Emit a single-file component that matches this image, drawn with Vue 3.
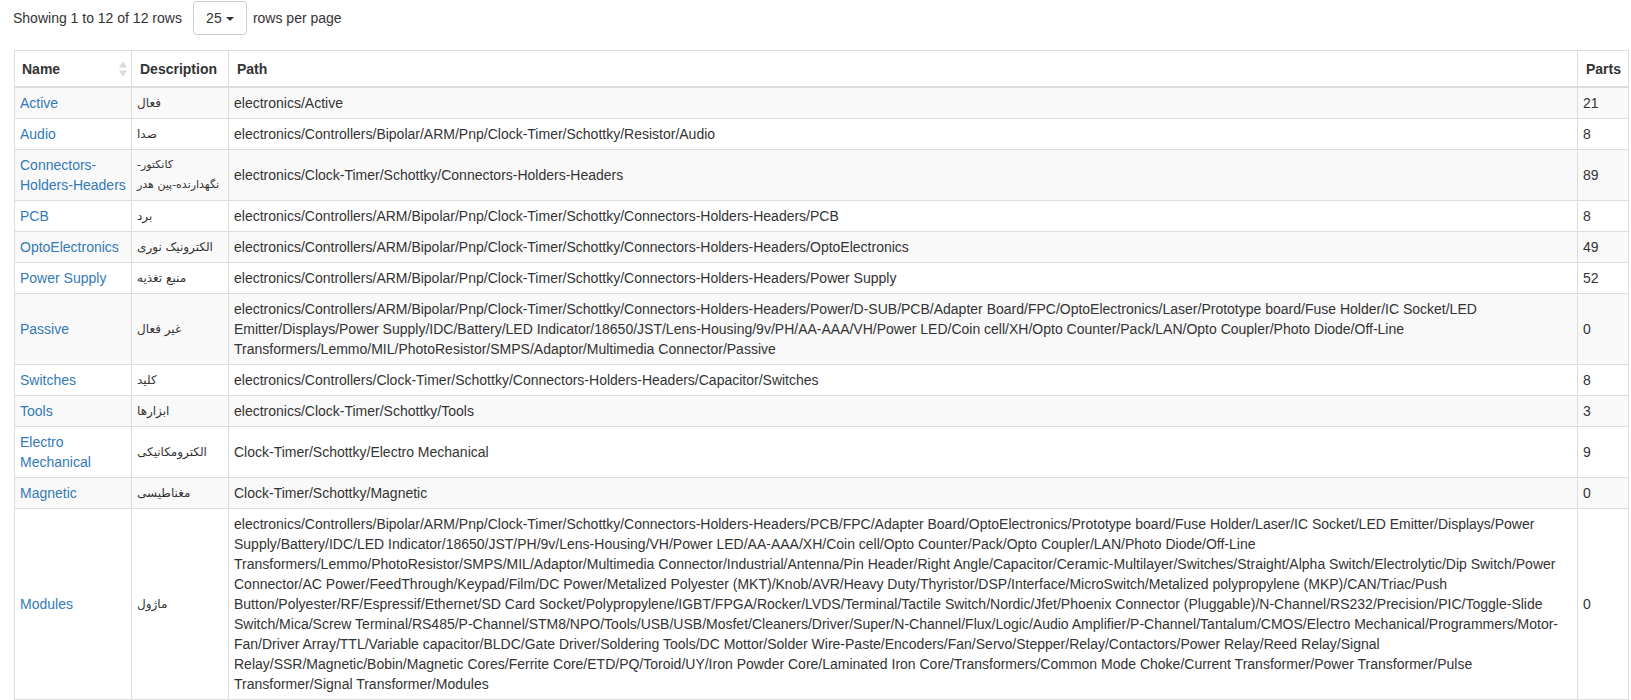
<script setup>
const rows = [
  { name: 'Active', desc: 'فعال', path: 'electronics/Active', parts: 21 },
  { name: 'Audio', desc: 'صدا', path: 'electronics/Controllers/Bipolar/ARM/Pnp/Clock-Timer/Schottky/Resistor/Audio', parts: 8 },
  { name: 'Connectors-Holders-Headers', desc: 'کانکتور-\nنگهدارنده-پین هدر', tight: true, path: 'electronics/Clock-Timer/Schottky/Connectors-Holders-Headers', parts: 89 },
  { name: 'PCB', desc: 'برد', path: 'electronics/Controllers/ARM/Bipolar/Pnp/Clock-Timer/Schottky/Connectors-Holders-Headers/PCB', parts: 8 },
  { name: 'OptoElectronics', desc: 'الکترونیک نوری', path: 'electronics/Controllers/ARM/Bipolar/Pnp/Clock-Timer/Schottky/Connectors-Holders-Headers/OptoElectronics', parts: 49 },
  { name: 'Power Supply', desc: 'منبع تغذیه', path: 'electronics/Controllers/ARM/Bipolar/Pnp/Clock-Timer/Schottky/Connectors-Holders-Headers/Power Supply', parts: 52 },
  { name: 'Passive', desc: 'غیر فعال', path: 'electronics/Controllers/ARM/Bipolar/Pnp/Clock-Timer/Schottky/Connectors-Holders-Headers/Power/D-SUB/PCB/Adapter Board/FPC/OptoElectronics/Laser/Prototype board/Fuse Holder/IC Socket/LED Emitter/Displays/Power Supply/IDC/Battery/LED Indicator/18650/JST/Lens-Housing/9v/PH/AA-AAA/VH/Power LED/Coin cell/XH/Opto Counter/Pack/LAN/Opto Coupler/Photo Diode/Off-Line Transformers/Lemmo/MIL/PhotoResistor/SMPS/Adaptor/Multimedia Connector/Passive', parts: 0 },
  { name: 'Switches', desc: 'کلید', path: 'electronics/Controllers/Clock-Timer/Schottky/Connectors-Holders-Headers/Capacitor/Switches', parts: 8 },
  { name: 'Tools', desc: 'ابزارها', path: 'electronics/Clock-Timer/Schottky/Tools', parts: 3 },
  { name: 'Electro Mechanical', desc: 'الکترومکانیکی', path: 'Clock-Timer/Schottky/Electro Mechanical', parts: 9 },
  { name: 'Magnetic', desc: 'مغناطیسی', path: 'Clock-Timer/Schottky/Magnetic', parts: 0 },
  { name: 'Modules', desc: 'ماژول', path: 'electronics/Controllers/Bipolar/ARM/Pnp/Clock-Timer/Schottky/Connectors-Holders-Headers/PCB/FPC/Adapter Board/OptoElectronics/Prototype board/Fuse Holder/Laser/IC Socket/LED Emitter/Displays/Power Supply/Battery/IDC/LED Indicator/18650/JST/PH/9v/Lens-Housing/VH/Power LED/AA-AAA/XH/Coin cell/Opto Counter/Pack/Opto Coupler/LAN/Photo Diode/Off-Line Transformers/Lemmo/PhotoResistor/SMPS/MIL/Adaptor/Multimedia Connector/Industrial/Antenna/Pin Header/Right Angle/Capacitor/Ceramic-Multilayer/Switches/Straight/Alpha Switch/Electrolytic/Dip Switch/Power Connector/AC Power/FeedThrough/Keypad/Film/DC Power/Metalized Polyester (MKT)/Knob/AVR/Heavy Duty/Thyristor/DSP/Interface/MicroSwitch/Metalized polypropylene (MKP)/CAN/Triac/Push Button/Polyester/RF/Espressif/Ethernet/SD Card Socket/Polypropylene/IGBT/FPGA/Rocker/LVDS/Terminal/Tactile Switch/Nordic/Jfet/Phoenix Connector (Pluggable)/N-Channel/RS232/Precision/PIC/Toggle-Slide Switch/Mica/Screw Terminal/RS485/P-Channel/STM8/NPO/Tools/USB/USB/Mosfet/Cleaners/Driver/Super/N-Channel/Flux/Logic/Audio Amplifier/P-Channel/Tantalum/CMOS/Electro Mechanical/Programmers/Motor-Fan/Driver Array/TTL/Variable capacitor/BLDC/Gate Driver/Soldering Tools/DC Mottor/Solder Wire-Paste/Encoders/Fan/Servo/Stepper/Relay/Contactors/Power Relay/Reed Relay/Signal Relay/SSR/Magnetic/Bobin/Magnetic Cores/Ferrite Core/ETD/PQ/Toroid/UY/Iron Powder Core/Laminated Iron Core/Transformers/Common Mode Choke/Current Transformer/Power Transformer/Pulse Transformer/Signal Transformer/Modules', parts: 0 }
]
</script>

<template>
  <div class="page">
    <div class="pagination-detail">
      <span>Showing 1 to 12 of 12 rows</span>
      <button class="size-btn" type="button">25<span class="caret"></span></button>
      <span>rows per page</span>
    </div>
    <table class="table">
      <colgroup>
        <col class="c-name" />
        <col class="c-desc" />
        <col />
        <col class="c-parts" />
      </colgroup>
      <thead>
        <tr>
          <th class="sortable">
            <div class="th-inner">Name</div>
            <svg class="sort" width="10" height="16" viewBox="0 0 10 16" aria-hidden="true">
              <path d="M5 0.5 L9 6.5 H1 Z" fill="#d8d8d8" />
              <path d="M5 15.5 L9 9.5 H1 Z" fill="#d8d8d8" />
            </svg>
          </th>
          <th><div class="th-inner">Description</div></th>
          <th><div class="th-inner">Path</div></th>
          <th><div class="th-inner">Parts</div></th>
        </tr>
      </thead>
      <tbody>
        <tr v-for="(r, i) in rows" :key="r.name" :class="{ odd: i % 2 === 0 }">
          <td><a href="#" class="link">{{ r.name }}</a></td>
          <td class="fa" :class="{ tight: r.tight }">{{ r.desc }}</td>
          <td>{{ r.path }}</td>
          <td>{{ r.parts }}</td>
        </tr>
      </tbody>
    </table>
  </div>
</template>

<style>
html, body { margin: 0; background: #fff; overflow: hidden; }
</style>

<style scoped>
.page {
  padding: 0 2px 0 14px;
  font-family: "Liberation Sans", Arial, sans-serif;
  font-size: 14px;
  line-height: 20px;
  color: #333;
}
.pagination-detail {
  display: flex;
  align-items: center;
  height: 36px;
  margin-bottom: 14px;
  margin-left: -1px;
}
.size-btn {
  margin: 0 6px 0 11px;
  width: 54px;
  height: 34px;
  padding: 0;
  background: #fff;
  border: 1px solid #ccc;
  border-radius: 4px;
  font: inherit;
  color: #333;
}
.caret {
  display: inline-block;
  margin-left: 4px;
  vertical-align: middle;
  border-top: 4px solid #333;
  border-left: 4px solid transparent;
  border-right: 4px solid transparent;
}
.table {
  width: 100%;
  table-layout: fixed;
  border-collapse: collapse;
  border: 1px solid #ddd;
}
.c-name { width: 117px; }
.c-desc { width: 97px; }
.c-parts { width: 51px; }
th {
  position: relative;
  padding: 0;
  text-align: left;
  font-weight: 700;
  border: 1px solid #ddd;
  border-bottom-width: 2px;
}
.th-inner {
  padding: 8px 8px 7px;
  white-space: nowrap;
  overflow: hidden;
}
.sortable .th-inner { padding-left: 7px; }
.sort {
  position: absolute;
  right: 3px;
  top: 10px;
}
td {
  padding: 5px;
  border: 1px solid #ddd;
  vertical-align: middle;
}
.fa {
  font-family: "DejaVu Sans", sans-serif;
  font-size: 12px;
  white-space: pre;
  unicode-bidi: plaintext;
  text-align: left;
}
.fa.tight { font-size: 11px; }
.odd td { background: #f9f9f9; }
.link { color: #337ab7; text-decoration: none; }
</style>
